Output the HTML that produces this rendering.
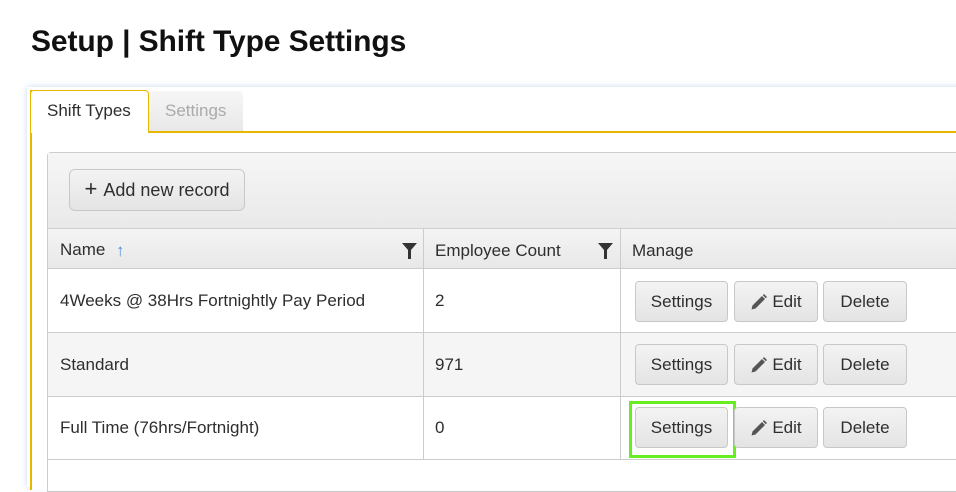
<!DOCTYPE html>
<html><head><style>
*{box-sizing:border-box;margin:0;padding:0}
body{width:956px;height:483px;overflow:hidden;background:#fff;font-family:"Liberation Sans",sans-serif;color:#2e2e2e;position:relative}
.a{position:absolute}
h1{position:absolute;left:31px;top:25px;font-size:30px;font-weight:bold;color:#111;letter-spacing:-0.1px}
.btn{position:absolute;height:41px;border:1px solid #c8c8c8;border-radius:4px;background:linear-gradient(#f3f3f3,#e4e4e4);font-size:17px;color:#2e2e2e;display:flex;align-items:center;justify-content:center}
.cell{position:absolute;font-size:17px;color:#2e2e2e}
</style></head><body>
<h1>Setup | Shift Type Settings</h1>
<div class="a" style="left:27px;top:87px;width:940px;height:400px;box-shadow:0 0 6px #c6daf0"></div>
<div class="a" style="left:30px;top:90px;width:930px;height:400px;background:#fff;border-left:2px solid #e6b800"></div>
<div class="a" style="left:148px;top:91px;width:95px;height:41px;background:linear-gradient(#f6f6f6,#e8e8e8);border-radius:4px 4px 0 0;color:#aaa;font-size:17px;padding:10px 0 0 17px">Settings</div>
<div class="a" style="left:148px;top:131px;width:810px;height:2px;background:#e6b800"></div>
<div class="a" style="left:30px;top:90px;width:119px;height:43px;border:1px solid #e6b800;border-bottom:none;border-radius:4px 4px 0 0;background:#fff;font-size:17px;padding:10px 0 0 16px;color:#2e2e2e">Shift Types</div>
<div class="a" style="left:47px;top:152px;width:920px;height:340px;border:1px solid #ccc;border-radius:4px 0 0 0"></div>
<div class="a" style="left:48px;top:153px;width:910px;height:76px;background:linear-gradient(#f6f6f6,#e9e9e9);border-bottom:1px solid #d0d0d0"></div>
<div class="btn" style="left:69px;top:169px;width:176px;height:42px;border-radius:6px;font-size:18px"><span style="font-size:22px;margin-right:6px;margin-top:-3px">+</span>Add new record</div>
<div class="a" style="left:48px;top:229px;width:910px;height:40px;background:linear-gradient(#f4f4f4,#e8e8e8);border-bottom:1px solid #ccc"></div>
<div class="cell" style="left:60px;top:240px">Name</div>
<div class="cell" style="left:116px;top:241px;color:#5b8fd0;font-size:17px">&#8593;</div>
<svg class="a" style="left:402px;top:243px" width="15" height="16" viewBox="0 0 15 16"><path d="M0 0H15L9 7V16H6V7Z" fill="#333"/></svg>
<div class="cell" style="left:435px;top:241px">Employee Count</div>
<svg class="a" style="left:598px;top:243px" width="15" height="16" viewBox="0 0 15 16"><path d="M0 0H15L9 7V16H6V7Z" fill="#333"/></svg>
<div class="cell" style="left:632px;top:241px">Manage</div>
<div class="a" style="left:48px;top:333px;width:910px;height:63px;background:#f5f5f5"></div>
<div class="a" style="left:48px;top:332px;width:910px;height:1px;background:#ccc"></div>
<div class="a" style="left:48px;top:396px;width:910px;height:1px;background:#ccc"></div>
<div class="a" style="left:48px;top:459px;width:910px;height:1px;background:#ccc"></div>
<div class="a" style="left:423px;top:229px;width:1px;height:231px;background:#ccc"></div>
<div class="a" style="left:620px;top:229px;width:1px;height:231px;background:#ccc"></div>
<div class="cell" style="left:60px;top:291px">4Weeks @ 38Hrs Fortnightly Pay Period</div>
<div class="cell" style="left:435px;top:291px">2</div>
<div class="cell" style="left:60px;top:355px">Standard</div>
<div class="cell" style="left:435px;top:355px">971</div>
<div class="cell" style="left:60px;top:418px">Full Time (76hrs/Fortnight)</div>
<div class="cell" style="left:435px;top:418px">0</div>
<div class="a" style="left:629px;top:401px;width:107px;height:57px;border:3px solid #66ee22"></div>
<div class="btn" style="left:635px;top:281px;width:93px">Settings</div>
<div class="btn" style="left:734px;top:281px;width:84px"><svg width="18" height="18" viewBox="0 0 18 18" style="margin-right:4px"><path d="M1.5 16.5L2.5 12.5L12 3L15 6L5.5 15.5Z" fill="#555"/><path d="M12.8 2.2L14 1L17 4L15.8 5.2Z" fill="#555"/></svg>Edit</div>
<div class="btn" style="left:823px;top:281px;width:84px">Delete</div>
<div class="btn" style="left:635px;top:344px;width:93px">Settings</div>
<div class="btn" style="left:734px;top:344px;width:84px"><svg width="18" height="18" viewBox="0 0 18 18" style="margin-right:4px"><path d="M1.5 16.5L2.5 12.5L12 3L15 6L5.5 15.5Z" fill="#555"/><path d="M12.8 2.2L14 1L17 4L15.8 5.2Z" fill="#555"/></svg>Edit</div>
<div class="btn" style="left:823px;top:344px;width:84px">Delete</div>
<div class="btn" style="left:635px;top:407px;width:93px">Settings</div>
<div class="btn" style="left:734px;top:407px;width:84px"><svg width="18" height="18" viewBox="0 0 18 18" style="margin-right:4px"><path d="M1.5 16.5L2.5 12.5L12 3L15 6L5.5 15.5Z" fill="#555"/><path d="M12.8 2.2L14 1L17 4L15.8 5.2Z" fill="#555"/></svg>Edit</div>
<div class="btn" style="left:823px;top:407px;width:84px">Delete</div>
</body></html>
